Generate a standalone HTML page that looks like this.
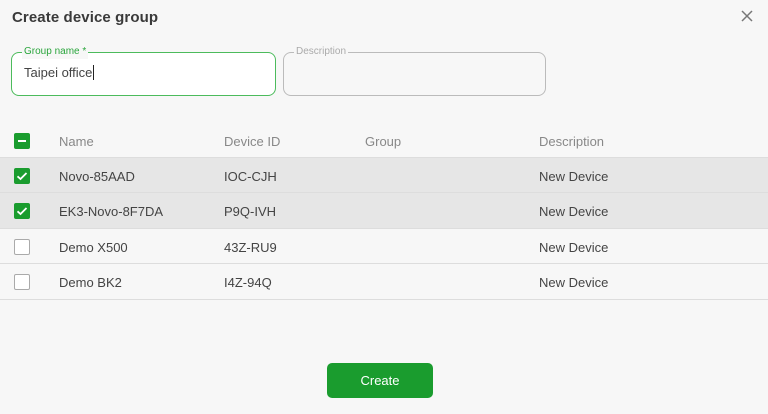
<!DOCTYPE html>
<html><head><style>
body{margin:0;width:768px;height:414px;background:#f7f7f7;font-family:"Liberation Sans",sans-serif;position:relative;overflow:hidden}
.t{position:absolute;left:12px;top:9px;font-size:15px;color:#3a3a3a;font-weight:bold;letter-spacing:0.1px}
.x{position:absolute;left:740px;top:9px;width:14px;height:14px}
.f{position:absolute;border-radius:8px;box-sizing:border-box}
.lbl{position:absolute;top:-8px;left:10px;font-size:10px;background:#f7f7f7;padding:0 2px;line-height:14px}
.row{position:absolute;left:0;width:768px;height:35px;border-bottom:1px solid #ddd;box-sizing:border-box;font-size:13px;color:#444}
.row span{position:absolute;top:11px}
.cb{position:absolute;left:14px;top:10px;width:16px;height:16px;border-radius:2px;box-sizing:border-box}
.on{background:#1a9c2e}
.off{border:1.5px solid #aaa;background:#fff}
.btn{position:absolute;left:327px;top:363px;width:106px;height:35px;background:#1a9c2e;border-radius:5px;color:#fff;font-size:13px;text-align:center;line-height:35px}
</style></head><body>
<div class="t">Create device group</div>
<svg class="x" viewBox="0 0 14 14"><path d="M2 2L12 12M12 2L2 12" stroke="#777" stroke-width="1.5"/></svg>
<div class="f" style="left:11px;top:52px;width:265px;height:44px;border:1.5px solid #4cbb5c;background:#fff">
<div class="lbl" style="color:#2aa53c">Group name *</div>
<div style="position:absolute;left:12px;top:12px;font-size:13px;color:#444">Taipei office<span style="border-left:1.5px solid #222;margin-left:1px;height:15px;display:inline-block;vertical-align:-3px"></span></div>
</div>
<div class="f" style="left:283px;top:52px;width:263px;height:44px;border:1px solid #bbb">
<div class="lbl" style="color:#aaa">Description</div>
</div>
<div class="row" style="top:123px;color:#888">
<div class="cb on"><div style="position:absolute;left:4px;top:7px;width:8px;height:2px;background:#fff"></div></div>
<span style="left:59px">Name</span><span style="left:224px">Device ID</span><span style="left:365px">Group</span><span style="left:539px">Description</span></div>
<div class="row" style="top:158px;background:#e6e6e6"><svg class="cb on" viewBox="0 0 16 16"><path d="M3.5 8.3L6.5 11L12.5 5" stroke="#fff" stroke-width="1.8" fill="none"/></svg>
<span style="left:59px">Novo-85AAD</span><span style="left:224px">IOC-CJH</span><span style="left:539px">New Device</span></div>
<div class="row" style="top:193px;height:36px;background:#e6e6e6"><svg class="cb on" viewBox="0 0 16 16"><path d="M3.5 8.3L6.5 11L12.5 5" stroke="#fff" stroke-width="1.8" fill="none"/></svg>
<span style="left:59px">EK3-Novo-8F7DA</span><span style="left:224px">P9Q-IVH</span><span style="left:539px">New Device</span></div>
<div class="row" style="top:229px"><div class="cb off"></div>
<span style="left:59px">Demo X500</span><span style="left:224px">43Z-RU9</span><span style="left:539px">New Device</span></div>
<div class="row" style="top:264px;height:36px"><div class="cb off"></div>
<span style="left:59px">Demo BK2</span><span style="left:224px">I4Z-94Q</span><span style="left:539px">New Device</span></div>
<div class="btn">Create</div>
</body></html>
